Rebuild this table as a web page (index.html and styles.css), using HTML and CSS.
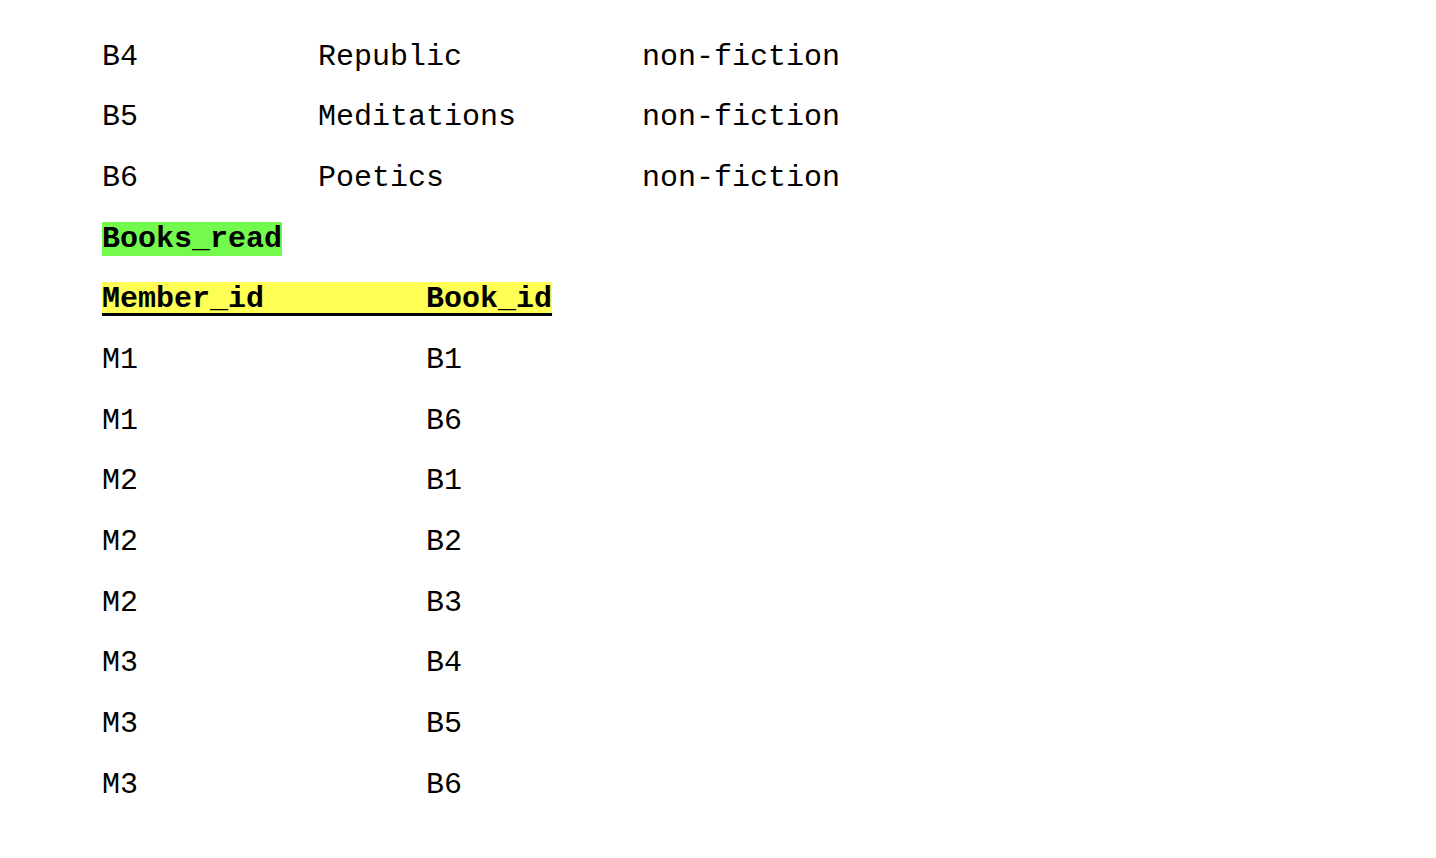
FILE: index.html
```html
<!DOCTYPE html>
<html lang="en">
<head>
<meta charset="utf-8">
<title>Books</title>
<link rel="stylesheet" href="styles.css">
</head>
<body>
<main class="doc">
  <div class="table books">
    <div class="row"><span>B4</span><span>Republic</span><span>non-fiction</span></div>
    <div class="row"><span>B5</span><span>Meditations</span><span>non-fiction</span></div>
    <div class="row"><span>B6</span><span>Poetics</span><span>non-fiction</span></div>
  </div>
  <div class="line"><span class="title">Books_read</span></div>
  <div class="line"><span class="header">Member_id         Book_id</span></div>
  <div class="table reads">
    <div class="row"><span>M1</span><span>B1</span></div>
    <div class="row"><span>M1</span><span>B6</span></div>
    <div class="row"><span>M2</span><span>B1</span></div>
    <div class="row"><span>M2</span><span>B2</span></div>
    <div class="row"><span>M2</span><span>B3</span></div>
    <div class="row"><span>M3</span><span>B4</span></div>
    <div class="row"><span>M3</span><span>B5</span></div>
    <div class="row"><span>M3</span><span>B6</span></div>
  </div>
</main>
</body>
</html>
```
FILE: styles.css
```css
html, body {
  margin: 0;
  padding: 0;
  background: #ffffff;
}

body {
  font-family: "Liberation Mono", "Courier New", monospace;
  font-size: 30px;
  line-height: 60.667px;
  color: #000000;
}

.doc {
  padding: 26.667px 0 0 102px;
}

.row {
  display: grid;
  white-space: pre;
}

.books .row {
  grid-template-columns: 216px 324px auto;
}

.reads .row {
  grid-template-columns: 324px auto;
}

.line {
  white-space: pre;
}

.title {
  font-weight: bold;
  background: #74fa4e;
}

.header {
  font-weight: bold;
  background: #ffff55;
  text-decoration: underline;
  text-decoration-thickness: 3px;
  text-underline-offset: 6px;
}
```
